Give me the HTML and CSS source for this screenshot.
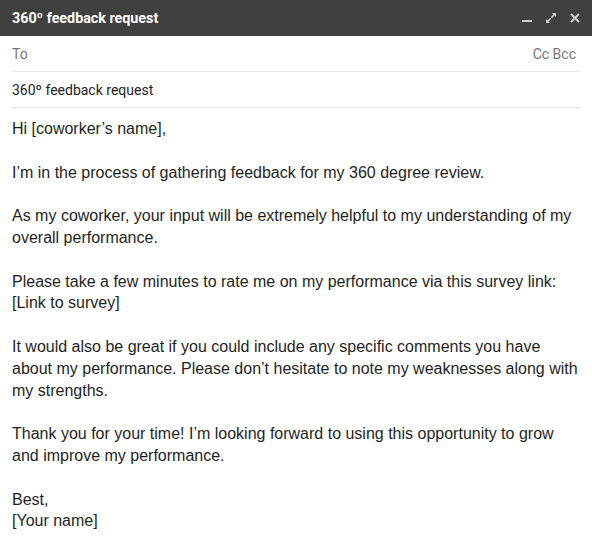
FILE: index.html
```html
<!DOCTYPE html>
<html>
<head>
<meta charset="utf-8">
<link rel="stylesheet" href="styles.css">
</head>
<body>
<div class="compose">
  <div class="titlebar">
    <span class="title">360º feedback request</span>
    <div class="controls">
      <svg class="icon" width="12" height="12" viewBox="0 0 12 12"><rect x="1" y="8" width="10" height="2" fill="#cfcfcf"/></svg>
      <svg class="icon" width="12" height="12" viewBox="0 0 12 12"><path d="M7 1h4v4L9.6 3.6 7 6.2 5.8 5 8.4 2.4zM5 11H1V7l1.4 1.4L5 5.8 6.2 7 3.6 9.6z" fill="#cfcfcf"/></svg>
      <svg class="icon" width="12" height="12" viewBox="0 0 12 12"><path d="M2 2l8 8M10 2l-8 8" stroke="#cfcfcf" stroke-width="2"/></svg>
    </div>
  </div>
  <div class="fields">
    <div class="row to-row"><span class="label">To</span><span class="label">Cc Bcc</span></div>
    <div class="row subject">360º feedback request</div>
  </div>
  <div class="body">
    <p>Hi [coworker’s name],</p>
    <p>I’m in the process of gathering feedback for my 360 degree review.</p>
    <p>As my coworker, your input will be extremely helpful to my understanding of my overall performance.</p>
    <p>Please take a few minutes to rate me on my performance via this survey link:<br>[Link to survey]</p>
    <p>It would also be great if you could include any specific comments you have about my performance. Please don’t hesitate to note my weaknesses along with my strengths.</p>
    <p>Thank you for your time! I’m looking forward to using this opportunity to grow and improve my performance.</p>
    <p>Best,<br>[Your name]</p>
  </div>
</div>
</body>
</html>
```
FILE: styles.css
```css
html, body { margin: 0; padding: 0; background: #fff; }
.compose { width: 592px; }
.titlebar {
  height: 36px;
  background: #404040;
  display: flex;
  align-items: center;
  justify-content: space-between;
  padding: 0 11px 0 12px;
  box-sizing: border-box;
}
.title {
  font-family: Roboto, "Liberation Sans", sans-serif;
  font-weight: 700;
  font-size: 14.3px;
  color: #fff;
}
.controls { display: flex; gap: 12px; align-items: center; }
.icon { display: block; }
.fields { margin: 0 12px; }
.row {
  height: 35px;
  border-bottom: 1px solid #e6e6e6;
  display: flex;
  align-items: center;
  font-family: Roboto, "Liberation Sans", sans-serif;
  font-size: 14px;
}
.to-row { justify-content: space-between; padding-right: 4px; }
.label { color: #777; }
.subject { color: #222; }
.body {
  padding: 10px 12px 0 12px;
  font-family: "Liberation Sans", Arial, sans-serif;
  font-size: 16px;
  line-height: 21.8px;
  color: #1f1f1f;
}
.body p { margin: 0 0 21.8px 0; }
```
